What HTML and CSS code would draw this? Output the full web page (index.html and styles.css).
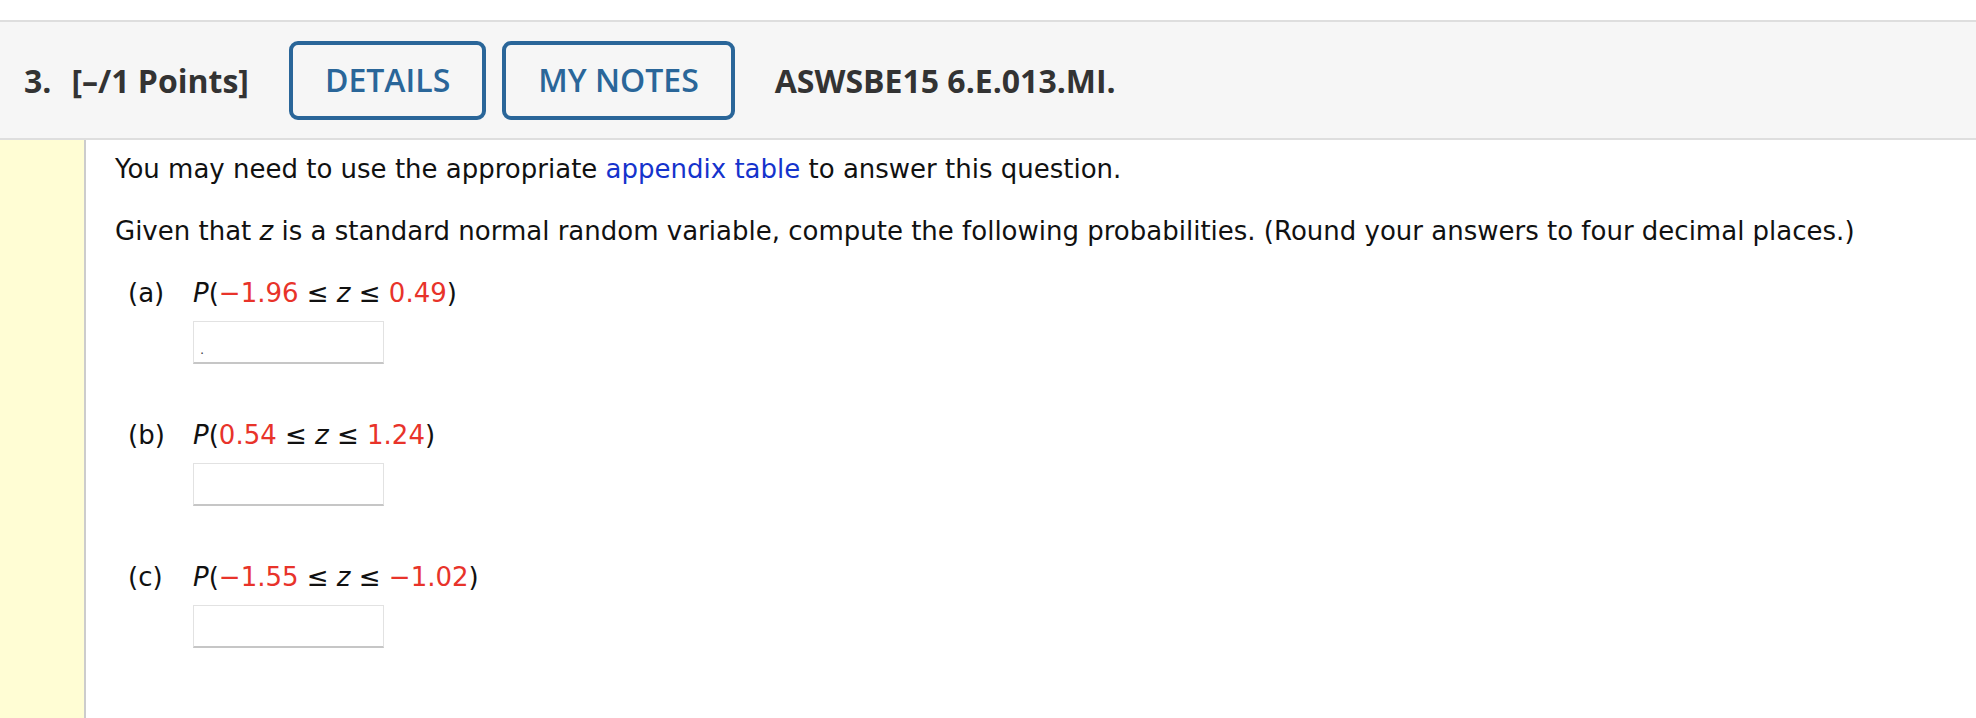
FILE: index.html
```html
<!DOCTYPE html>
<html lang="en">
<head>
<meta charset="utf-8">
<title>Question 3</title>
<link rel="stylesheet" href="styles.css">
</head>
<body>
<div class="page">
  <header class="qhead">
    <span class="qnum">3.</span>
    <span class="pts">[–/1 Points]</span>
    <button class="btn btn-details" type="button">DETAILS</button>
    <button class="btn btn-notes" type="button">MY NOTES</button>
    <span class="qid">ASWSBE15 6.E.013.MI.</span>
  </header>
  <div class="qbody">
    <div class="gutter"></div>
    <div class="content">
      <p class="para">You may need to use the appropriate <a class="link" href="#">appendix table</a> to answer this question.</p>
      <p class="para">Given that <i>z</i> is a standard normal random variable, compute the following probabilities. (Round your answers to four decimal places.)</p>
      <div class="part">
        <div class="expr"><span class="lbl">(a)</span><i>P</i>(<span class="red">−1.96</span> ≤ <i>z</i> ≤ <span class="red">0.49</span>)</div>
        <input class="ans ans-dot" type="text" value=".">
      </div>
      <div class="part">
        <div class="expr"><span class="lbl">(b)</span><i>P</i>(<span class="red">0.54</span> ≤ <i>z</i> ≤ <span class="red">1.24</span>)</div>
        <input class="ans" type="text" value="">
      </div>
      <div class="part">
        <div class="expr"><span class="lbl">(c)</span><i>P</i>(<span class="red">−1.55</span> ≤ <i>z</i> ≤ <span class="red">−1.02</span>)</div>
        <input class="ans" type="text" value="">
      </div>
    </div>
  </div>
</div>
</body>
</html>
```

FILE: styles.css
```css
html, body {
  margin: 0;
  padding: 0;
  background: #ffffff;
}

.page {
  padding-top: 20px;
}

.qhead {
  display: flex;
  align-items: center;
  height: 116px;
  background: #f6f6f6;
  border-top: 2px solid #dedede;
  border-bottom: 2px solid #dedede;
  padding-left: 24px;
  font-family: "Open Sans", "Liberation Sans", sans-serif;
  font-size: 32px;
  color: #333333;
  white-space: nowrap;
}

.qnum {
  font-weight: 700;
  margin-right: 20px;
}

.pts {
  font-weight: 700;
  margin-right: 40px;
}

.btn {
  flex: 0 0 auto;
  box-sizing: border-box;
  height: 79px;
  padding: 0 32px;
  background: #f6f6f6;
  border: 4px solid #2a6699;
  border-radius: 9px;
  font-family: "Open Sans", "Liberation Sans", sans-serif;
  font-size: 32px;
  font-weight: 600;
  color: #2a6699;
  line-height: 1;
  white-space: nowrap;
}

.btn-details {
  margin-right: 16px;
}

.qid {
  font-weight: 700;
  margin-left: 40px;
}

.qbody {
  display: flex;
  min-height: 578px;
}

.gutter {
  flex: 0 0 84px;
  background: #fffdd4;
  border-right: 2px solid #cccccc;
}

.content {
  flex: 1;
  padding: 14px 0 0 29px;
  font-family: "DejaVu Sans", Verdana, sans-serif;
  font-size: 26px;
  line-height: 30px;
  color: #111111;
}

.para {
  margin: 0 0 32px 0;
}

.link {
  color: #1533cc;
  text-decoration: none;
}

.part {
  margin-top: 0;
  margin-bottom: 56px;
}

.para + .part {
  margin-top: 2px;
}

.expr {
  padding-left: 13px;
}

.lbl {
  display: inline-block;
  width: 65px;
}

.red {
  color: #e8332a;
}

.ans {
  display: block;
  box-sizing: border-box;
  width: 191px;
  height: 43px;
  margin: 13px 0 0 78px;
  padding: 14px 0 0 6px;
  border: 1px solid #e2e2e2;
  border-bottom: 2px solid #c6c6c6;
  background: #ffffff;
  font-family: "DejaVu Sans", Verdana, sans-serif;
  font-size: 13px;
  color: #444444;
  outline: none;
}
```
